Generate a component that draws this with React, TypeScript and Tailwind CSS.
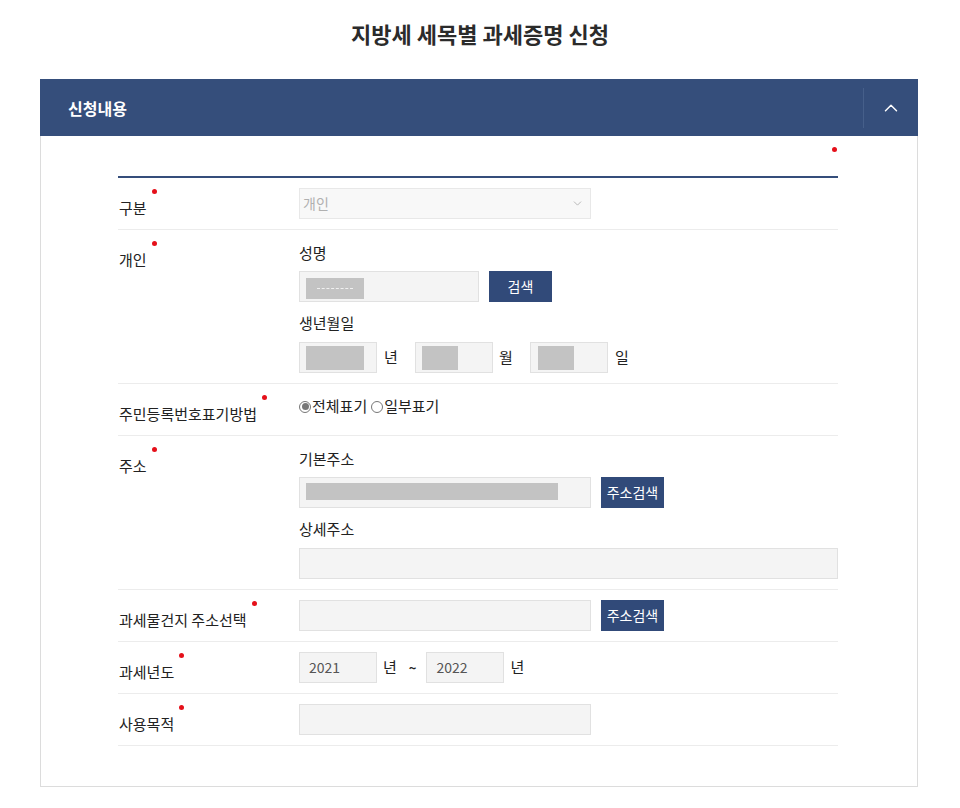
import { ChevronDown, ChevronUp } from 'lucide-react';
import type { ReactNode } from 'react';

const inputCls = 'h-[31px] border border-[#e1e1e1] bg-[#f4f4f4]';

const Mask = ({ className }: { className: string }) => <div className={`bg-[#c3c3c3] ${className}`} />;

const Label = ({ children }: { children: ReactNode }) => (
  <div className="w-[181px] flex-none pt-[17px] pl-[1px]">
    <span className="relative text-[15px] leading-5 text-[#222]">
      {children}
      <span className="absolute -right-[10px] -top-[8px] h-[5px] w-[5px] rounded-full bg-[#e5101a]" />
    </span>
  </div>
);

const Row = ({ label, children }: { label: ReactNode; children: ReactNode }) => (
  <div className="flex border-b border-[#ececec]">
    <Label>{label}</Label>
    <div className="flex-1 py-[10px]">{children}</div>
  </div>
);

const NavyButton = ({ children, className }: { children: ReactNode; className: string }) => (
  <button type="button" className={`h-[31px] bg-[#314a79] text-[14px] text-white ${className}`}>
    {children}
  </button>
);

const Radio = ({ checked, label }: { checked: boolean; label: string }) => (
  <span className="flex items-center">
    <span className="mr-[1px] flex h-[12px] w-[12px] items-center justify-center rounded-full border border-[#777] bg-white">
      {checked && <span className="h-[7px] w-[7px] rounded-full bg-[#777]" />}
    </span>
    <span className="text-[15px] text-[#222]">{label}</span>
  </span>
);

export default function App() {
  return (
    <div className="min-h-[808px] w-[960px] bg-white font-['Noto_Sans_CJK_KR','Noto_Sans',sans-serif] text-[#222]">
      <h1 className="pt-[17px] pb-[15px] text-center text-[22px] font-bold leading-[32px] text-[#2b2b2b]">
        지방세 세목별 과세증명 신청
      </h1>

      <div className="ml-[40px] mt-[15px] w-[878px] border border-[#dcdcdc]">
        <div className="-mx-px -mt-px flex h-[57px] items-center bg-[#354e7b]">
          <span className="ml-[28px] flex-1 text-[16px] font-bold text-white">신청내용</span>
          <div className="h-[40px] w-px bg-[#465f8a]" />
          <div className="flex w-[54px] items-center justify-center">
            <ChevronUp size={22} strokeWidth={1.6} className="text-white" />
          </div>
        </div>

        <div className="pl-[77px] pr-[79px] pb-[40px]">
          <div className="flex h-[40px] justify-end pr-[1px] pt-[11px]">
            <span className="h-[5px] w-[5px] rounded-full bg-[#e5101a]" />
          </div>
          <div className="h-[2px] bg-[#354e7b]" />

          <Row label="구분">
            <div className="flex h-[31px] w-[292px] items-center justify-between border border-[#e8e8e8] bg-[#f8f8f8] pl-[3px] pr-[6px]">
              <span className="text-[14px] text-[#b0b0b0]">개인</span>
              <ChevronDown size={13} strokeWidth={1.5} className="text-[#aaa]" />
            </div>
          </Row>

          <Row label="개인">
            <div className="pt-[1px] text-[15px] leading-6">성명</div>
            <div className="mt-[6px] flex gap-[10px]">
              <div className={`${inputCls} w-[180px] pl-[6px] pt-[6px]`}>
                <div className="flex h-[21px] w-[58px] items-center justify-center bg-[#c3c3c3]">
                  <div className="h-px w-[36px] border-t border-dashed border-[#f0f0f0]" />
                </div>
              </div>
              <NavyButton className="w-[63px]">검색</NavyButton>
            </div>
            <div className="mt-[9px] text-[15px] leading-6">생년월일</div>
            <div className="mt-[7px] flex items-center">
              <div className={`${inputCls} w-[78px] pl-[6px] pt-[3px]`}>
                <Mask className="h-[24px] w-[58px]" />
              </div>
              <span className="ml-[7px] w-[31px] text-[15px]">년</span>
              <div className={`${inputCls} w-[78px] pl-[6px] pt-[3px]`}>
                <Mask className="h-[24px] w-[36px]" />
              </div>
              <span className="ml-[6px] w-[31px] text-[15px]">월</span>
              <div className={`${inputCls} w-[78px] pl-[7px] pt-[3px]`}>
                <Mask className="h-[24px] w-[36px]" />
              </div>
              <span className="ml-[7px] text-[15px]">일</span>
            </div>
          </Row>

          <Row label="주민등록번호표기방법">
            <div className="flex h-[31px] items-center gap-[4px] pb-[6px]">
              <Radio checked label="전체표기" />
              <Radio checked={false} label="일부표기" />
            </div>
          </Row>

          <Row label="주소">
            <div className="pt-[1px] text-[15px] leading-6">기본주소</div>
            <div className="mt-[6px] flex gap-[10px]">
              <div className={`${inputCls} w-[292px] pl-[6px] pt-[5px]`}>
                <Mask className="h-[17px] w-[252px]" />
              </div>
              <NavyButton className="w-[63px]">주소검색</NavyButton>
            </div>
            <div className="mt-[9px] text-[15px] leading-6">상세주소</div>
            <div className={`${inputCls} mt-[7px] w-full`} />
          </Row>

          <Row label="과세물건지 주소선택">
            <div className="flex gap-[10px]">
              <div className={`${inputCls} w-[292px]`} />
              <NavyButton className="w-[63px]">주소검색</NavyButton>
            </div>
          </Row>

          <Row label="과세년도">
            <div className="flex items-center">
              <div className={`${inputCls} flex w-[78px] items-center pl-[9px] text-[14px] text-[#555]`}>2021</div>
              <span className="ml-[6px] text-[15px]">년</span>
              <span className="ml-[12px] mr-[10px] text-[13px] font-bold">~</span>
              <div className={`${inputCls} flex w-[78px] items-center pl-[9px] text-[14px] text-[#555]`}>2022</div>
              <span className="ml-[6px] text-[15px]">년</span>
            </div>
          </Row>

          <Row label="사용목적">
            <div className={`${inputCls} w-[292px]`} />
          </Row>
        </div>
      </div>
    </div>
  );
}
